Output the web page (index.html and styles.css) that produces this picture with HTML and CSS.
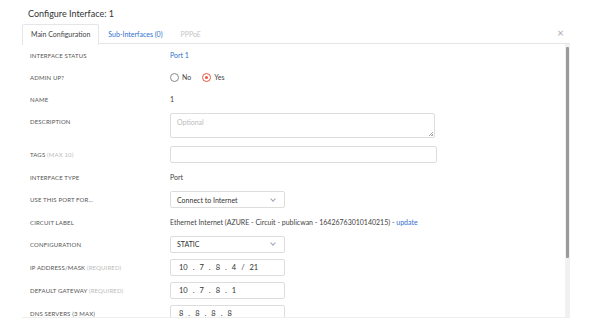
FILE: index.html
```html
<!DOCTYPE html>
<html lang="en">

<head>
    <meta charset="UTF-8">
    <meta name="viewport" content="width=device-width, initial-scale=1.0">
    <title>Configure Interface</title>
    <link rel="stylesheet" href="styles.css">
</head>

<body>
    <div class="dialog">
        <h1 class="dialog-title">Configure Interface: 1</h1>

        <div class="tabs">
            <span class="tab active">Main Configuration</span>
            <span class="tab link">Sub-Interfaces (0)</span>
            <span class="tab disabled">PPPoE</span>
            <span class="close">&times;</span>
        </div>

        <div class="panel">
            <div class="form">
                <div class="row">
                    <div class="label">Interface Status</div>
                    <div class="value"><a class="link">Port 1</a></div>
                </div>

                <div class="row">
                    <div class="label">Admin Up?</div>
                    <div class="value radios">
                        <span class="radio"><span class="dot"></span>No</span>
                        <span class="radio checked"><span class="dot"></span>Yes</span>
                    </div>
                </div>

                <div class="row">
                    <div class="label">Name</div>
                    <div class="value">1</div>
                </div>

                <div class="row top">
                    <div class="label">Description</div>
                    <div class="value">
                        <div class="textarea">
                            <span class="placeholder">Optional</span>
                            <span class="grip"></span>
                        </div>
                    </div>
                </div>

                <div class="row ctl tall">
                    <div class="label">Tags <span class="hint">(Max 10)</span></div>
                    <div class="value"><div class="input wide"></div></div>
                </div>

                <div class="row">
                    <div class="label">Interface Type</div>
                    <div class="value">Port</div>
                </div>

                <div class="row ctl">
                    <div class="label">Use this port for...</div>
                    <div class="value">
                        <div class="input select">Connect to Internet<span class="chev"></span></div>
                    </div>
                </div>

                <div class="row">
                    <div class="label">Circuit Label</div>
                    <div class="value">Ethernet Internet (AZURE - Circuit - publicwan - 16426763010140215) - <a class="link">update</a></div>
                </div>

                <div class="row ctl short">
                    <div class="label">Configuration</div>
                    <div class="value">
                        <div class="input select caps">STATIC<span class="chev"></span></div>
                    </div>
                </div>

                <div class="row ctl tall">
                    <div class="label">IP Address/Mask <span class="hint">(Required)</span></div>
                    <div class="value">
                        <div class="input ip"><span>10</span><span>.</span><span>7</span><span>.</span><span>8</span><span>.</span><span>4</span><span>/</span><span>21</span></div>
                    </div>
                </div>

                <div class="row ctl">
                    <div class="label">Default Gateway <span class="hint">(Required)</span></div>
                    <div class="value">
                        <div class="input ip"><span>10</span><span>.</span><span>7</span><span>.</span><span>8</span><span>.</span><span>1</span></div>
                    </div>
                </div>

                <div class="row ctl">
                    <div class="label">DNS Servers (3 Max)</div>
                    <div class="value">
                        <div class="input ip"><span>8</span><span>.</span><span>8</span><span>.</span><span>8</span><span>.</span><span>8</span></div>
                    </div>
                </div>
            </div>

            <!-- drawn scrollbar, headless screenshots hide the native one -->
            <div class="scrollbar"><div class="thumb"></div></div>
        </div>
    </div>
</body>

</html>
```

FILE: styles.css
```css
body {
    margin: 0;
    font-family: Lato, "Open Sans", sans-serif;
    background-color: #fff;
    color: #444;
}

.dialog {
    width: 548px;
    padding-left: 22px;
}

.dialog-title {
    margin: 0;
    padding: 8px 0 0 6px;
    height: 16px;
    font-size: 9px;
    line-height: 11px;
    font-weight: normal;
    color: #333;
}

.tabs {
    position: relative;
    display: flex;
    height: 19px;
    border-bottom: 1px solid #e6e6e6;
}

.tab {
    padding: 0 8px;
    font-size: 7px;
    line-height: 19px;
    border: 1px solid transparent;
    border-bottom: none;
}

.tab.active {
    color: #444;
    background: #fff;
    border-color: #e6e6e6;
    border-radius: 2px 2px 0 0;
    height: 20px;
}

.tab.link {
    color: #2f6fce;
}

.tab.disabled {
    color: #c4c4c4;
}

.close {
    position: absolute;
    right: 6px;
    top: 3px;
    font-size: 12px;
    line-height: 12px;
    color: #b0b0b0;
}

.panel {
    position: relative;
    height: 273px;
    overflow: hidden;
    border-bottom: 1px solid #eee;
}

.scrollbar {
    position: absolute;
    top: 0;
    right: 0;
    bottom: 0;
    width: 5px;
    background: #f1f1f1;
}

.thumb {
    margin: 3px 1px 0 1px;
    height: 211px;
    background: #9a9a9a;
    border-radius: 1px;
}

.row {
    display: flex;
    align-items: center;
    min-height: 22px;
    font-size: 7px;
}

.row.top {
    align-items: flex-start;
    height: 32px;
}

.row.top .label {
    padding-top: 8px;
}

.row.ctl {
    min-height: 23px;
}

.row.ctl.tall {
    min-height: 24px;
}

.row.ctl.short {
    min-height: 22px;
}

.label {
    width: 140px;
    padding-left: 8px;
    font-size: 6px;
    letter-spacing: 0.15px;
    text-transform: uppercase;
    color: #555;
    flex-shrink: 0;
}

.hint {
    color: #bbb;
}

.value {
    color: #444;
}

.link {
    color: #2f6fce;
}

.radios {
    display: flex;
    gap: 11px;
}

.radio {
    display: flex;
    align-items: center;
    gap: 3px;
    color: #444;
}

.dot {
    width: 7px;
    height: 7px;
    border: 1px solid #888;
    border-radius: 50%;
    position: relative;
}

.radio.checked .dot {
    border-color: #e8563a;
}

.radio.checked .dot::after {
    content: "";
    position: absolute;
    left: 2px;
    top: 2px;
    width: 3px;
    height: 3px;
    border-radius: 50%;
    background: #e8563a;
}

.textarea {
    position: relative;
    margin-top: 3px;
    width: 265px;
    height: 25px;
    border: 1px solid #ddd;
    border-radius: 2px;
    box-sizing: border-box;
    padding: 4px 6px;
}

.placeholder {
    color: #bbb;
}

.grip {
    position: absolute;
    right: 1px;
    bottom: 1px;
    width: 4px;
    height: 4px;
    background: linear-gradient(135deg, transparent 45%, #aaa 45%, #aaa 55%, transparent 55%, transparent 75%, #aaa 75%);
}

.input {
    box-sizing: border-box;
    height: 17px;
    border: 1px solid #ddd;
    border-radius: 2px;
    width: 115px;
    display: flex;
    align-items: center;
    padding: 0 6px;
    font-size: 7px;
    color: #333;
}

.input.wide {
    width: 267px;
}

.select {
    justify-content: space-between;
}

.chev {
    width: 3px;
    height: 3px;
    border-right: 1px solid #9aa8bb;
    border-bottom: 1px solid #9aa8bb;
    transform: rotate(45deg);
    margin: 0 3px 2px 0;
}

.ip {
    padding-left: 8px;
    gap: 5px;
    font-size: 7.5px;
}
```
